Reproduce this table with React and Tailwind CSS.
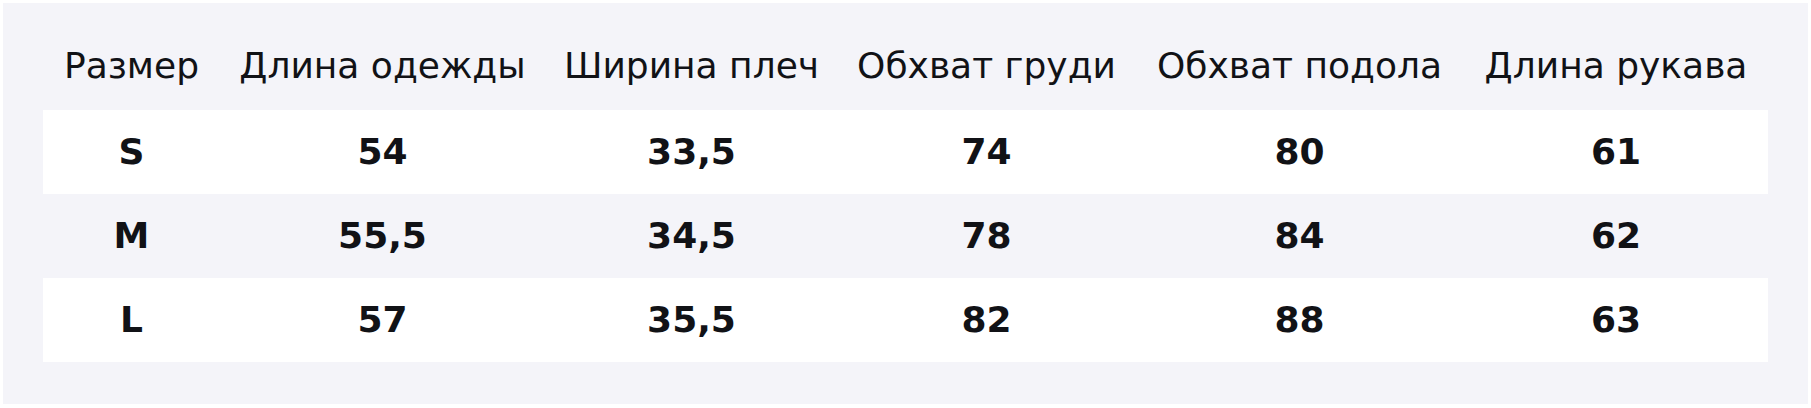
const headers = [
  "Размер",
  "Длина одежды",
  "Ширина плеч",
  "Обхват груди",
  "Обхват подола",
  "Длина рукава",
];

const widths = ["w-[177px]", "w-[325px]", "w-[293px]", "w-[297px]", "w-[329px]", "w-[304px]"];

const rows = [
  ["S", "54", "33,5", "74", "80", "61"],
  ["M", "55,5", "34,5", "78", "84", "62"],
  ["L", "57", "35,5", "82", "88", "63"],
];

export default function App() {
  return (
    <div className="h-[408px] w-full bg-white p-[3px] font-['DejaVu_Sans',sans-serif] text-[#111216]">
      <div className="h-[401px] bg-[#f4f4f9] px-[40px] pt-[19px]">
        <table className="w-full table-fixed border-collapse">
          <thead>
            <tr className="h-[88px]">
              {headers.map((h, i) => (
                <th key={h} className={`${widths[i]} p-0 text-center text-[36px] font-normal`}>
                  {h}
                </th>
              ))}
            </tr>
          </thead>
          <tbody>
            {rows.map((row, r) => (
              <tr key={row[0]} className={`h-[84px] ${r % 2 === 0 ? "bg-white" : ""}`}>
                {row.map((v, i) => (
                  <td key={i} className="p-0 text-center text-[36px] font-bold">
                    {v}
                  </td>
                ))}
              </tr>
            ))}
          </tbody>
        </table>
      </div>
    </div>
  );
}
